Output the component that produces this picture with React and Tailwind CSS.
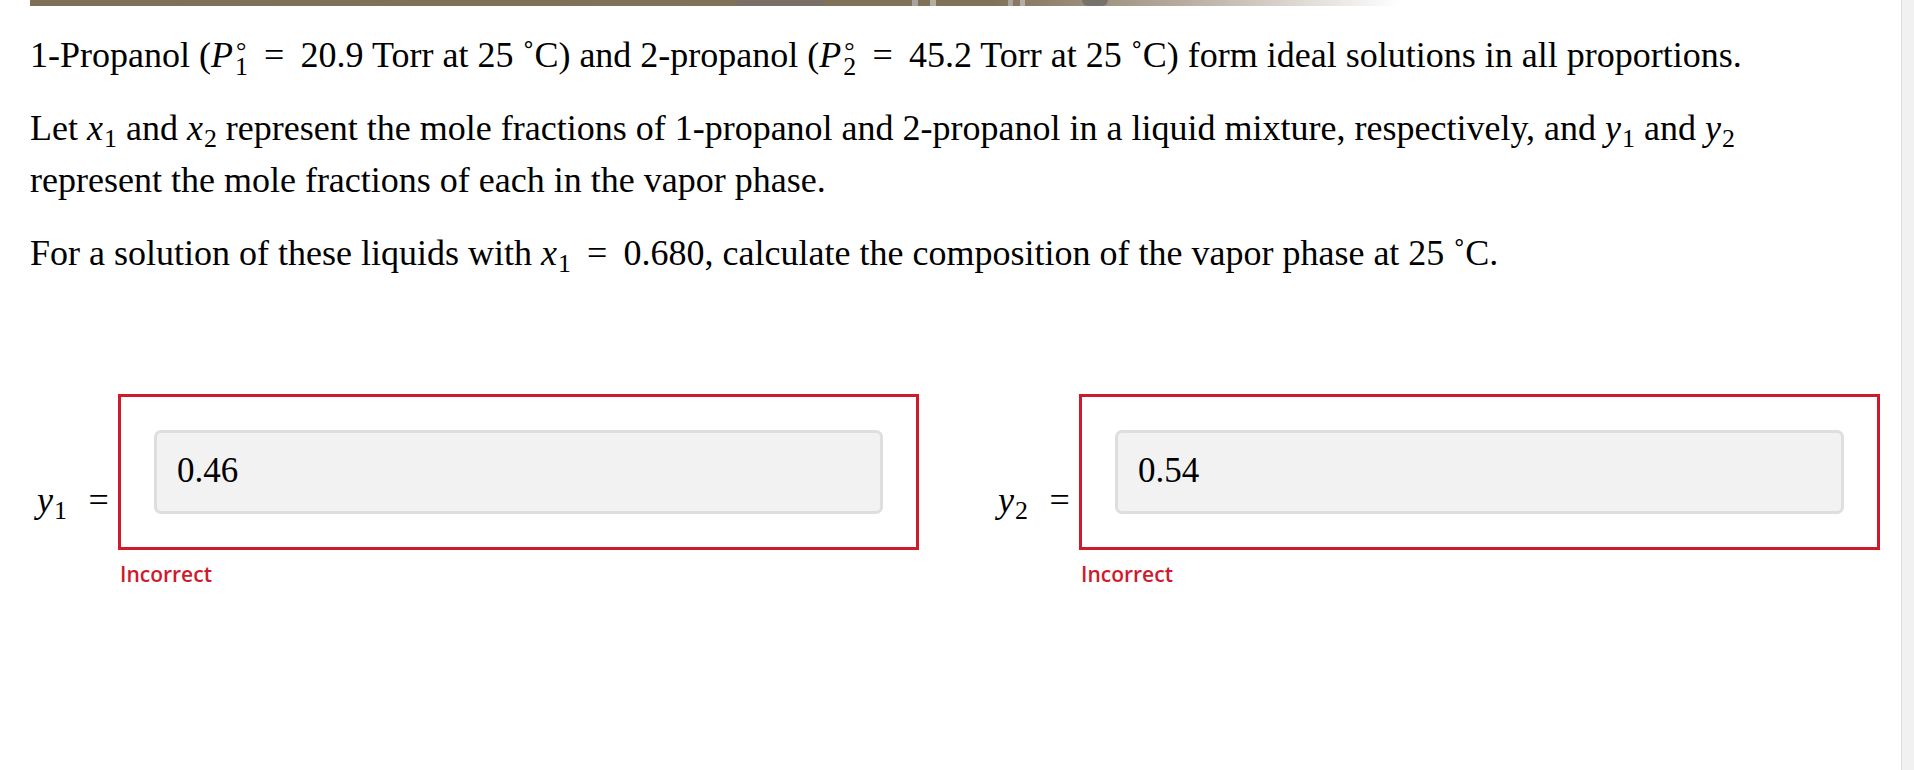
const serif = "font-['Liberation_Serif','Times_New_Roman',serif]";

function V({ v, s }) {
  return (
    <span className="whitespace-nowrap">
      <span className="italic">{v}</span>
      <span className="inline-block text-[0.72em] leading-none align-[-0.28em] ml-[1px]">{s}</span>
    </span>
  );
}

function Pstar({ s }) {
  return (
    <span className="whitespace-nowrap">
      <span className="italic">P</span>
      <span className="inline-flex flex-col items-start text-[0.72em] leading-[0.6] align-[8px] ml-[2px]">
        <span className="pl-[1px]">°</span>
        <span>{s}</span>
      </span>
    </span>
  );
}

function Eq() {
  return <span className="mx-[0.45em]">=</span>;
}

function Answer({ s, value }) {
  return (
    <div className="flex w-[889px] flex-col">
      <div className="flex items-start">
        <div className={`w-[88px] shrink-0 pt-[80px] pl-[7px] text-[36px] leading-[52px] whitespace-nowrap ${serif}`}>
          <V v="y" s={s} />
          <span className="ml-[0.6em]">=</span>
        </div>
        <div className="flex-1 border-[3px] border-[#d0192b] px-[33px] py-[33px]">
          <div className={`flex h-[84px] items-center rounded-[7px] border-[3px] border-[#dedede] bg-[#f2f2f2] pl-[20px] pb-[2px] text-[35px] text-black ${serif}`}>
            {value}
          </div>
        </div>
      </div>
      <div className="pl-[90px] pt-[9px] font-['Open_Sans',sans-serif] text-[21px] font-semibold text-[#d0192b]">
        Incorrect
      </div>
    </div>
  );
}

export default function App() {
  return (
    <div className="flex h-[770px] w-full overflow-hidden bg-white">
      <main className="flex-1 pl-[30px] pr-[21px]">
        <div className="relative h-[6px] w-full bg-[linear-gradient(to_right,#7e6f58_0%,#807159_52%,#b5aa9c_62%,#ffffff_74%)]">
          <span className="absolute left-[705px] top-0 h-[6px] w-[90px] rounded-b-full bg-[#7a6f66]" />
          <span className="absolute left-[882px] top-0 h-[6px] w-[6px] bg-[#a9a39b]" />
          <span className="absolute left-[900px] top-0 h-[6px] w-[6px] bg-[#b2aca3]" />
          <span className="absolute left-[978px] top-0 h-[6px] w-[5px] bg-[#aaa49c]" />
          <span className="absolute left-[990px] top-0 h-[6px] w-[5px] bg-[#b4aea6]" />
          <span className="absolute left-[1052px] top-0 h-[6px] w-[26px] rounded-b-full bg-[#77716c]" />
        </div>
        <div className={`pt-[23px] text-[36px] leading-[52px] text-black ${serif}`}>
          <p className="whitespace-nowrap">
            1-Propanol (<Pstar s="1" /><Eq />20.9 Torr at 25 ˚C) and 2-propanol (<Pstar s="2" /><Eq />45.2 Torr at 25 ˚C) form ideal solutions in all proportions.
          </p>
          <p className="mt-[21px] whitespace-nowrap">
            Let <V v="x" s="1" /> and <V v="x" s="2" /> represent the mole fractions of 1-propanol and 2-propanol in a liquid mixture, respectively, and <V v="y" s="1" /> and <V v="y" s="2" />
            <br />
            represent the mole fractions of each in the vapor phase.
          </p>
          <p className="mt-[21px] whitespace-nowrap">
            For a solution of these liquids with <V v="x" s="1" /><Eq />0.680, calculate the composition of the vapor phase at 25 ˚C.
          </p>
        </div>
        <div className="mt-[115px] flex gap-[72px]">
          <Answer s="1" value="0.46" />
          <Answer s="2" value="0.54" />
        </div>
      </main>
      <div className="h-full w-[13px] shrink-0 border-l border-[#dcdcdc] bg-[#f1f1f1]" />
    </div>
  );
}
